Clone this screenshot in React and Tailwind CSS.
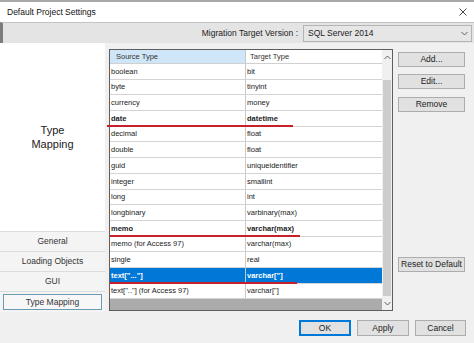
import React from "react";

const rows = [
  ["boolean", "bit"],
  ["byte", "tinyint"],
  ["currency", "money"],
  ["date", "datetime", "bold", -3, 186],
  ["decimal", "float"],
  ["double", "float"],
  ["guid", "uniqueidentifier"],
  ["integer", "smallint"],
  ["long", "int"],
  ["longbinary", "varbinary(max)"],
  ["memo", "varchar(max)", "bold", 0, 190],
  ["memo (for Access 97)", "varchar(max)"],
  ["single", "real"],
  ['text["..."]', 'varchar["]', "sel", 0, 187],
  ['text[".."] (for Access 97)', 'varchar["]'],
];

function Chevron({ up, className }) {
  return (
    <svg width="7" height="5" viewBox="0 0 7 5" className={className}>
      <path
        d={up ? "M0.5 4 L3.5 1 L6.5 4" : "M0.5 1 L3.5 4 L6.5 1"}
        fill="none"
        stroke="#606060"
        strokeWidth="1"
      />
    </svg>
  );
}

function Btn({ children, className = "" }) {
  return (
    <div
      className={
        "flex items-center justify-center bg-[#e1e1e1] border border-[#adadad] text-[8.5px] text-[#222] " +
        className
      }
    >
      {children}
    </div>
  );
}

export default function App() {
  return (
    <div
      className="w-[474px] h-[343px] overflow-hidden bg-[#f0f0f0] flex flex-col text-[#222]"
      style={{ fontFamily: '"Liberation Sans", Arial, sans-serif' }}
    >
      {/* Title bar */}
      <div className="h-[22px] shrink-0 bg-white border-t-2 border-[#a8a8a8] flex items-center justify-between pl-[7px] pr-[7px]">
        <span className="text-[8.5px] text-[#111]">Default Project Settings</span>
        <svg width="8" height="8" viewBox="0 0 8 8">
          <path d="M0.5 0.5 L7.5 7.5 M7.5 0.5 L0.5 7.5" stroke="#333" strokeWidth="0.9" />
        </svg>
      </div>

      {/* Migration bar */}
      <div className="h-[21px] shrink-0 bg-[#e4e4e4] border-t border-[#c4c4c4] border-l-[3px] border-l-[#7c7c7c] flex items-center justify-end pr-[2px]">
        <span className="text-[8.5px] mr-[5px]">Migration Target Version :</span>
        <div className="w-[169px] h-[17px] bg-[#e6e6e6] border border-[#b4b4b4] flex items-center justify-between pl-[4px] pr-[3px]">
          <span className="text-[8.5px]">SQL Server 2014</span>
          <Chevron />
        </div>
      </div>

      {/* Body */}
      <div className="flex-1 flex flex-col">
        <div className="flex h-[269px] shrink-0">
          {/* Left panel */}
          <div className="w-[105px] flex flex-col">
            <div className="h-[188px] bg-white flex items-center justify-center">
              <div className="text-[11px] leading-[14px] text-center text-[#222]">
                Type
                <br />
                Mapping
              </div>
            </div>
            {["General", "Loading Objects", "GUI"].map((t) => (
              <div
                key={t}
                className="h-[20px] bg-[#f4f4f4] border-t border-[#dcdcdc] flex items-center justify-center text-[8.5px] text-[#333]"
              >
                {t}
              </div>
            ))}
            <div className="h-[21px] bg-[#f4f4f4] border-t border-[#dcdcdc] flex items-center px-[3px]">
              <div className="w-full h-[16px] border border-[#6a9ab4] bg-[#f7f7f7] flex items-center justify-center text-[8.5px] text-[#333]">
                Type Mapping
              </div>
            </div>
          </div>

          {/* Table */}
          <div className="ml-[4px] mt-[6px] w-[284px] h-[262px] border border-[#5e5e5e] flex bg-[#ababab]">
            <div className="w-[272px] flex flex-col">
              <div className="h-[14px] flex border-b border-[#d0d0d0] bg-white">
                <div className="w-[136px] bg-[#cfe6f8] border-r border-[#c8c8c8] flex items-center pl-[6px] text-[7.5px] text-[#333]">
                  Source Type
                </div>
                <div className="flex-1 flex items-center pl-[4px] text-[7.5px] text-[#333]">
                  Target Type
                </div>
              </div>
              {rows.map(([a, b, kind, ulLeft, ulW]) => {
                const sel = kind === "sel";
                const bold = kind === "bold" || sel;
                return (
                  <div
                    key={a}
                    className={
                      "relative h-[15.7px] flex border-b border-[#d4d4d4] text-[7.5px] " +
                      (sel ? "bg-[#0078d7] text-white" : "bg-white text-[#222]") +
                      (bold ? " font-bold" : "")
                    }
                  >
                    <div className="w-[136px] border-r border-[#c8c8c8] flex items-center pl-[1px] whitespace-nowrap overflow-hidden">
                      {a}
                    </div>
                    <div className="flex-1 flex items-center pl-[1px] whitespace-nowrap overflow-hidden">
                      {b}
                    </div>
                    {kind && (
                      <div
                        className="absolute bottom-[-1px] h-[1.5px] bg-[#c8202a]"
                        style={{ left: ulLeft, width: ulW }}
                      />
                    )}
                  </div>
                );
              })}
            </div>
            {/* Scrollbar */}
            <div className="flex-1 flex flex-col bg-[#f0f0f0]">
              <div className="h-[14px] flex items-center justify-center">
                <Chevron up />
              </div>
              <div className="h-[16px]" />
              <div className="flex-1 mx-[1px] bg-[#cdcdcd]" />
              <div className="h-[14px] flex items-center justify-center">
                <Chevron />
              </div>
            </div>
          </div>

          {/* Right buttons */}
          <div className="ml-[5px] mt-[9px] w-[67px] flex flex-col">
            <Btn className="h-[15px]">Add...</Btn>
            <Btn className="h-[15px] mt-[7px]">Edit...</Btn>
            <Btn className="h-[15px] mt-[8px]">Remove</Btn>
            <Btn className="h-[15px] mt-[145px]">Reset to Default</Btn>
          </div>
        </div>

        {/* Footer */}
        <div className="flex justify-end pr-[8px] pt-[8px] gap-[6px]">
          <Btn className="w-[52px] h-[16px] !border-[#0078d7] border-2">OK</Btn>
          <Btn className="w-[52px] h-[16px]">Apply</Btn>
          <Btn className="w-[51px] h-[16px]">Cancel</Btn>
        </div>
      </div>
    </div>
  );
}
